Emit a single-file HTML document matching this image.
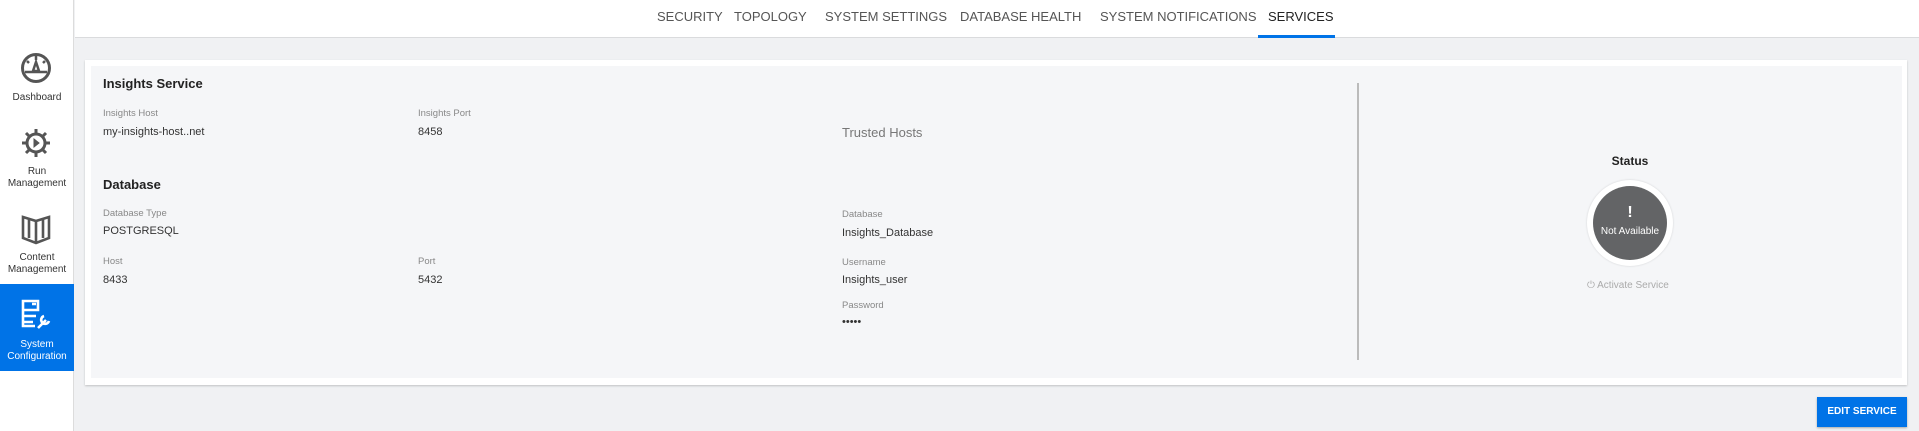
<!DOCTYPE html>
<html><head><meta charset="utf-8"><style>
*{margin:0;padding:0;box-sizing:border-box}
body{width:1919px;height:431px;background:#f0f1f3;font-family:"Liberation Sans",sans-serif;position:relative;overflow:hidden;color:#333}
.abs{position:absolute;white-space:nowrap}
#side{position:absolute;left:0;top:0;width:74px;height:431px;background:#fff;border-right:1px solid #dcdcdc}
#top{position:absolute;left:75px;top:0;width:1844px;height:38px;background:#fff;border-bottom:1px solid #dadbdd}
.tab{position:absolute;top:9px;font-size:13px;color:#555}
.sl{font-size:10px;color:#333;text-align:center;width:74px;left:0;line-height:12px}
.lbl{font-size:9.5px;color:#888}
.val{font-size:11px;color:#333}
.h{font-size:13px;font-weight:bold;color:#222}
</style></head><body>
<div id="side">
<svg class="abs" style="left:20px;top:52px" width="32" height="32" viewBox="0 0 32 32" fill="none" stroke="#555" stroke-width="3"><circle cx="16" cy="16" r="13.5"/><path d="M16 4v4M7 9l2 2M25 9l-2 2M16 10l-3 9h6zM5 20h22" stroke-width="2.5"/></svg>
<div class="abs sl" style="top:92px">Dashboard</div>
<svg class="abs" style="left:19px;top:126px" width="34" height="34" viewBox="0 0 34 34" fill="none" stroke="#555" stroke-width="3"><circle cx="17" cy="17" r="9"/><path d="M17 3v5M17 26v5M3 17h5M26 17h5M7 7l3 3M27 7l-3 3M7 27l3-3M27 27l-3-3"/><path d="M15 13l5 4-5 4z" fill="#555" stroke-width="1"/></svg>
<div class="abs sl" style="top:166px">Run<br>Management</div>
<svg class="abs" style="left:20px;top:213px" width="32" height="32" viewBox="0 0 32 32" fill="none" stroke="#555" stroke-width="2.6"><path d="M3 4v21l13 5 13-5V4l-13 4zM16 8v22M9 6v19M23 6v19"/></svg>
<div class="abs sl" style="top:252px">Content<br>Management</div>
<div class="abs" style="left:0;top:284px;width:74px;height:87px;background:#0073e7"></div>
<svg class="abs" style="left:20px;top:298px" width="34" height="34" viewBox="0 0 34 34" fill="none" stroke="#fff" stroke-width="2.6"><path d="M3 3h15v9H3zM12 6h4M3 12v16h12M3 18h13M3 24h10M18 30l8-8M24 18a4 4 0 1 0 5 5"/></svg>
<div class="abs sl" style="top:339px;color:#fff">System<br>Configuration</div>
</div>
<div id="top">
<div class="tab" style="left:582px">SECURITY</div>
<div class="tab" style="left:659px">TOPOLOGY</div>
<div class="tab" style="left:750px">SYSTEM SETTINGS</div>
<div class="tab" style="left:885px">DATABASE HEALTH</div>
<div class="tab" style="left:1025px">SYSTEM NOTIFICATIONS</div>
<div class="tab" style="left:1193px;color:#222">SERVICES</div>
<div class="abs" style="left:1183px;top:35px;width:77px;height:3px;background:#0073e7"></div>
</div>
<div class="abs" style="left:85px;top:60px;width:1822px;height:325px;background:#fff;box-shadow:0 1px 2px rgba(0,0,0,.2)"></div>
<div class="abs" style="left:91px;top:66px;width:1811px;height:312px;background:#f5f6f8"></div>
<div class="abs h" style="left:103px;top:76px">Insights Service</div>
<div class="abs lbl" style="left:103px;top:108px">Insights Host</div>
<div class="abs val" style="left:103px;top:126px">my-insights-host..net</div>
<div class="abs lbl" style="left:418px;top:108px">Insights Port</div>
<div class="abs val" style="left:418px;top:126px">8458</div>
<div class="abs" style="left:842px;top:125px;font-size:13px;color:#777">Trusted Hosts</div>
<div class="abs h" style="left:103px;top:177px">Database</div>
<div class="abs lbl" style="left:103px;top:208px">Database Type</div>
<div class="abs val" style="left:103px;top:225px">POSTGRESQL</div>
<div class="abs lbl" style="left:103px;top:256px">Host</div>
<div class="abs val" style="left:103px;top:274px">8433</div>
<div class="abs lbl" style="left:418px;top:256px">Port</div>
<div class="abs val" style="left:418px;top:274px">5432</div>
<div class="abs lbl" style="left:842px;top:209px">Database</div>
<div class="abs val" style="left:842px;top:227px">Insights_Database</div>
<div class="abs lbl" style="left:842px;top:257px">Username</div>
<div class="abs val" style="left:842px;top:274px">Insights_user</div>
<div class="abs lbl" style="left:842px;top:300px">Password</div>
<div class="abs val" style="left:842px;top:316px">•••••</div>
<div class="abs" style="left:1357px;top:83px;width:2px;height:277px;background:#bbb"></div>
<div class="abs h" style="left:1580px;top:154px;width:100px;text-align:center;font-size:12px">Status</div>
<div class="abs" style="left:1587px;top:180px;width:86px;height:86px;border-radius:50%;background:#fff;box-shadow:0 0 2px rgba(0,0,0,.15)"></div>
<div class="abs" style="left:1593px;top:186px;width:74px;height:74px;border-radius:50%;background:#636466"></div>
<div class="abs" style="left:1580px;top:204px;width:100px;text-align:center;color:#fff;font-size:16px;font-weight:bold">!</div>
<div class="abs" style="left:1580px;top:226px;width:100px;text-align:center;color:#fff;font-size:10px">Not Available</div>
<div class="abs" style="left:1587px;top:280px;font-size:10px;color:#aaa">&#x23FB; Activate Service</div>
<div class="abs" style="left:1817px;top:397px;width:90px;height:30px;background:#0073e7;color:#fff;font-size:10px;font-weight:bold;text-align:center;line-height:30px;box-shadow:0 1px 2px rgba(0,0,0,.3)">EDIT SERVICE</div>
</body></html>
